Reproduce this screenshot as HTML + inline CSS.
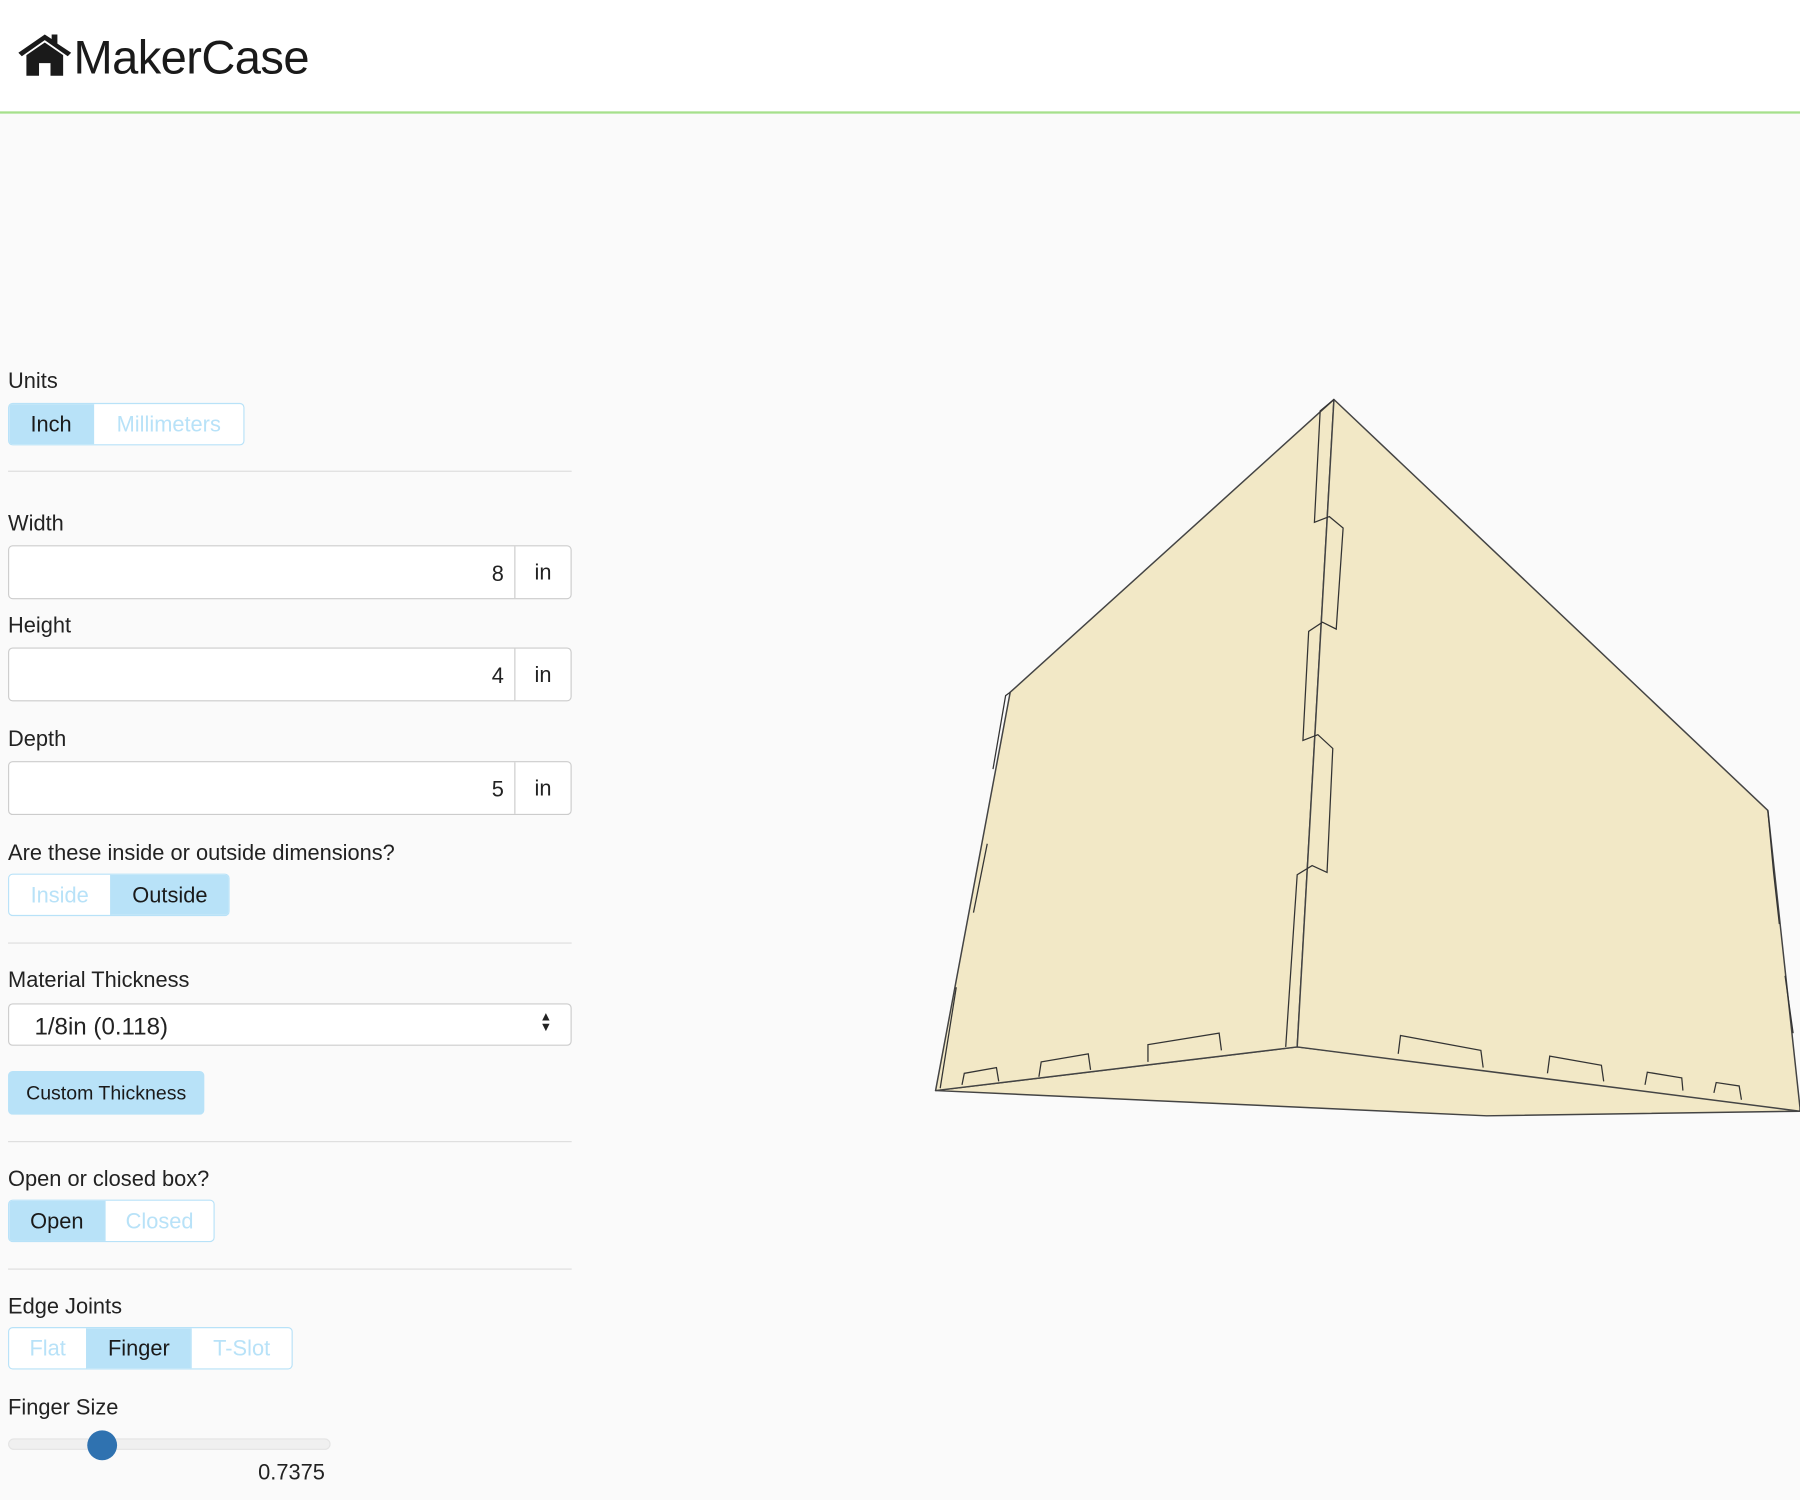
<!DOCTYPE html>
<html><head><meta charset="utf-8"><style>
html,body{margin:0;padding:0;width:1800px;height:1500px;overflow:hidden;background:#fafafa}
#w{position:absolute;left:0;top:0;width:1568px;height:1306px;transform:scale(1.147959);transform-origin:0 0;font-family:"Liberation Sans",sans-serif;color:#222}
.hdr{position:absolute;left:0;top:0;width:1568px;height:97px;background:#fff;border-bottom:2px solid #a6e08c}
.logo{position:absolute;left:64px;top:27px;font-size:41px;color:#1a1a1a;letter-spacing:-0.5px}
.lbl{position:absolute;left:7px;font-size:19px;color:#222}
.grp{position:absolute;left:7px;height:37px;display:flex;border:1px solid #b8e2f8;border-radius:4px;overflow:hidden;box-sizing:border-box;background:#fff}
.grp div{display:flex;align-items:center;justify-content:center;font-size:19px;color:#b8e2f8;box-sizing:border-box;padding-top:2px}
.grp div.on{background:#b8e2f8;color:#1a1a1a}
.grp div+div{border-left:1px solid #b8e2f8}
.hr{position:absolute;left:7px;width:491px;height:1px;background:#ddd}
.inp{position:absolute;left:7px;width:491px;height:47px;border:1px solid #ccc;border-radius:4px;background:#fff;box-sizing:border-box}
.inp .v{position:absolute;right:58px;top:14px;font-size:19px}
.inp .u{position:absolute;right:0;top:0;width:49px;height:45px;border-left:1px solid #ccc;display:flex;align-items:center;justify-content:center;font-size:19px;padding-top:3px;box-sizing:border-box}
</style></head><body><div id="w">
<div class="hdr">
<svg style="position:absolute;left:14px;top:28px" width="50" height="40" viewBox="0 0 50 40"><path d="M2 18 L25 2 L31 6 V2 H36 V10 L48 18 L45 21 L25 7 L5 21 Z" fill="#1a1a1a"/><path d="M9 20 L25 9 L41 20 V38 H30 V27 H20 V38 H9 Z" fill="#1a1a1a"/></svg>
<div class="logo">MakerCase</div></div>

<div class="lbl" style="top:322px">Units</div>
<div class="grp" style="top:351px;width:206px"><div class="on" style="width:73px">Inch</div><div style="flex:1">Millimeters</div></div>
<div class="hr" style="top:410px"></div>

<div class="lbl" style="top:446px">Width</div>
<div class="inp" style="top:475px"><span class="v">8</span><div class="u">in</div></div>
<div class="lbl" style="top:535px">Height</div>
<div class="inp" style="top:564px"><span class="v">4</span><div class="u">in</div></div>
<div class="lbl" style="top:634px">Depth</div>
<div class="inp" style="top:663px"><span class="v">5</span><div class="u">in</div></div>
<div class="lbl" style="top:733px">Are these inside or outside dimensions?</div>
<div class="grp" style="top:761px;width:193px"><div style="width:88px">Inside</div><div class="on" style="flex:1">Outside</div></div>
<div class="hr" style="top:821px"></div>

<div class="lbl" style="top:844px">Material Thickness</div>
<div class="inp" style="top:874px;height:37px"><span style="position:absolute;left:22px;top:8px;font-size:21px">1/8in (0.118)</span><span style="position:absolute;right:16px;top:7px;font-size:11px;line-height:9px">▲<br>▼</span></div>
<div style="position:absolute;left:7px;top:933px;width:171px;height:38px;background:#b8e2f8;border-radius:4px;font-size:17px;display:flex;align-items:center;justify-content:center;color:#1a1a1a;padding-top:2px;box-sizing:border-box">Custom Thickness</div>
<div class="hr" style="top:994px"></div>

<div class="lbl" style="top:1017px">Open or closed box?</div>
<div class="grp" style="top:1045px;width:180px"><div class="on" style="width:83px">Open</div><div style="flex:1">Closed</div></div>
<div class="hr" style="top:1105px"></div>

<div class="lbl" style="top:1128px">Edge Joints</div>
<div class="grp" style="top:1156px;width:248px"><div style="width:67px">Flat</div><div class="on" style="width:91px">Finger</div><div style="flex:1">T-Slot</div></div>
<div class="lbl" style="top:1216px">Finger Size</div>
<div style="position:absolute;left:7px;top:1253px;width:281px;height:10px;background:#f0f0f0;border:1px solid #e4e4e4;border-radius:5px;box-sizing:border-box"></div>
<div style="position:absolute;left:76px;top:1246px;width:26px;height:26px;border-radius:50%;background:#2f72b0"></div>
<div style="position:absolute;left:180px;width:103px;text-align:right;top:1273px;font-size:19px">0.7375</div>

<svg style="position:absolute;left:0;top:0" width="1568" height="1306" viewBox="0 0 1568 1306">
<g fill="#f2e8c6" stroke="#444" stroke-width="1.3" stroke-linejoin="round">
<polygon points="815,950 1130,912 1568,965 1568,968 1295,972"/>
<polygon points="1162,348 880,603 815,950 1130,912"/>
<polygon points="1162,348 1540,706 1568,965 1568,968 1130,912"/>
</g>
<g fill="none" stroke="#333" stroke-width="1.1">
<path d="M1162,348 L1150,358 L1145,455 L1158,450 L1170,460 L1164,548 L1152,542 L1140,550 L1135,645 L1148,640 L1161,652 L1156,760 L1143,754 L1130,762 L1120,912"/>
<path d="M880,603 L876,606 L865,670 M860,735 L848,795 M833,860 L819,948"/>
<path d="M1540,706 L1545,760 L1550,805 M1555,850 L1562,900"/>
<path d="M838,945 L840,935 L868,930 L870,942 M905,938 L907,925 L948,918 L950,932 M1000,925 L1000,910 L1062,900 L1064,915 M1218,918 L1220,902 L1290,915 L1292,930 M1348,935 L1350,920 L1395,928 L1397,942 M1433,945 L1435,934 L1465,939 L1466,950 M1493,952 L1495,943 L1515,946 L1517,958"/>
</g>
</svg>
</div></body></html>
